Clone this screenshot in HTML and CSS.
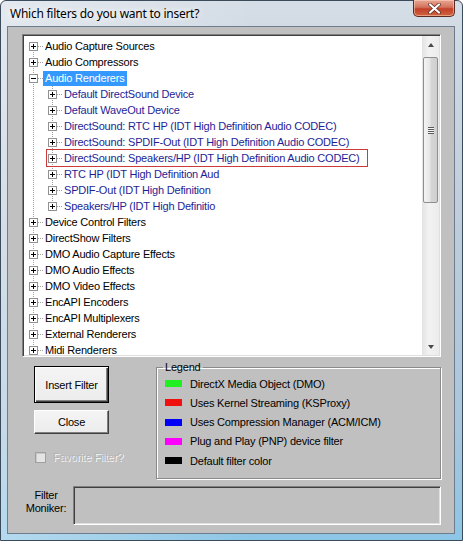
FILE: index.html
```html
<!DOCTYPE html>
<html lang="en">
<head>
    <meta charset="UTF-8">
    <title>Which filters do you want to insert?</title>
    <link rel="stylesheet" href="styles.css">
</head>
<body>
    <div class="window">
        <div class="titlebar">
            <span class="title">Which filters do you want to insert?</span>
            <div class="close">
                <svg width="13" height="11" viewBox="0 0 13 11">
                    <path d="M2 1.5 L11 9.5 M11 1.5 L2 9.5" stroke="#5a2a22" stroke-width="3.6" stroke-linecap="round"/>
                    <path d="M2 1.5 L11 9.5 M11 1.5 L2 9.5" stroke="#fff" stroke-width="2.2" stroke-linecap="round"/>
                </svg>
            </div>
        </div>

        <div class="client">
            <div class="tree">
                <div class="rows">
                    <div class="row"><span class="node"><span class="toggle"></span><span class="dots"></span><span class="label">Audio Capture Sources</span></span></div>
                    <div class="row"><span class="node"><span class="toggle"></span><span class="dots"></span><span class="label">Audio Compressors</span></span></div>
                    <div class="row"><span class="node"><span class="toggle open"></span><span class="dots"></span><span class="label selected">Audio Renderers</span></span></div>
                    <div class="children">
                        <div class="row child"><span class="node"><span class="toggle"></span><span class="dots"></span><span class="label">Default DirectSound Device</span></span></div>
                        <div class="row child"><span class="node"><span class="toggle"></span><span class="dots"></span><span class="label">Default WaveOut Device</span></span></div>
                        <div class="row child"><span class="node"><span class="toggle"></span><span class="dots"></span><span class="label">DirectSound: RTC HP (IDT High Definition Audio CODEC)</span></span></div>
                        <div class="row child"><span class="node"><span class="toggle"></span><span class="dots"></span><span class="label">DirectSound: SPDIF-Out (IDT High Definition Audio CODEC)</span></span></div>
                        <div class="row child"><span class="node marked"><span class="toggle"></span><span class="dots"></span><span class="label">DirectSound: Speakers/HP (IDT High Definition Audio CODEC)</span></span></div>
                        <div class="row child"><span class="node"><span class="toggle"></span><span class="dots"></span><span class="label">RTC HP (IDT High Definition Aud</span></span></div>
                        <div class="row child"><span class="node"><span class="toggle"></span><span class="dots"></span><span class="label">SPDIF-Out (IDT High Definition</span></span></div>
                        <div class="row child"><span class="node"><span class="toggle"></span><span class="dots"></span><span class="label">Speakers/HP (IDT High Definitio</span></span></div>
                    </div>
                    <div class="row"><span class="node"><span class="toggle"></span><span class="dots"></span><span class="label">Device Control Filters</span></span></div>
                    <div class="row"><span class="node"><span class="toggle"></span><span class="dots"></span><span class="label">DirectShow Filters</span></span></div>
                    <div class="row"><span class="node"><span class="toggle"></span><span class="dots"></span><span class="label">DMO Audio Capture Effects</span></span></div>
                    <div class="row"><span class="node"><span class="toggle"></span><span class="dots"></span><span class="label">DMO Audio Effects</span></span></div>
                    <div class="row"><span class="node"><span class="toggle"></span><span class="dots"></span><span class="label">DMO Video Effects</span></span></div>
                    <div class="row"><span class="node"><span class="toggle"></span><span class="dots"></span><span class="label">EncAPI Encoders</span></span></div>
                    <div class="row"><span class="node"><span class="toggle"></span><span class="dots"></span><span class="label">EncAPI Multiplexers</span></span></div>
                    <div class="row"><span class="node"><span class="toggle"></span><span class="dots"></span><span class="label">External Renderers</span></span></div>
                    <div class="row"><span class="node"><span class="toggle"></span><span class="dots"></span><span class="label">Midi Renderers</span></span></div>
                </div>
                <div class="scrollbar">
                    <div class="sb-button"><span class="arrow up"></span></div>
                    <div class="sb-track">
                        <div class="sb-thumb"><span class="grip"></span></div>
                    </div>
                    <div class="sb-button"><span class="arrow down"></span></div>
                </div>
            </div>

            <div class="middle">
                <div class="actions">
                    <button type="button" class="btn default">Insert Filter</button>
                    <button type="button" class="btn">Close</button>
                    <label class="favorite"><span class="check"></span>Favorite Filter?</label>
                </div>
                <fieldset class="legend">
                    <legend>Legend</legend>
                    <div class="key"><span class="swatch green"></span>DirectX Media Object (DMO)</div>
                    <div class="key"><span class="swatch red"></span>Uses Kernel Streaming (KSProxy)</div>
                    <div class="key"><span class="swatch blue"></span>Uses Compression Manager (ACM/ICM)</div>
                    <div class="key"><span class="swatch magenta"></span>Plug and Play (PNP) device filter</div>
                    <div class="key"><span class="swatch black"></span>Default filter color</div>
                </fieldset>
            </div>

            <div class="moniker-row">
                <div class="moniker-label">Filter<br>Moniker:</div>
                <div class="moniker-box"></div>
            </div>
        </div>
    </div>
</body>
</html>
```

FILE: styles.css
```css
body {
    margin: 0;
    font-family: "Liberation Sans", Arial, sans-serif;
    font-size: 11px;
    color: #000;
}
.window {
    width: 463px;
    height: 541px;
    box-sizing: border-box;
    display: flex;
    flex-direction: column;
    border: 1px solid #3c4b5c;
    border-radius: 6px 6px 0 0;
    background:
        linear-gradient(to right, rgba(255,255,255,0.35), rgba(255,255,255,0) 55%),
        linear-gradient(to bottom, #d5dde6, #c0cdda 40%, #a8c6dc 80%, #8cc6e6);
}
.titlebar {
    height: 26px;
    display: flex;
    justify-content: space-between;
    align-items: flex-start;
    padding: 0 7px 0 9px;
}
.title {
    font-family: "Noto Sans", sans-serif;
    font-size: 12px;
    letter-spacing: -0.25px;
    line-height: 26px;
    color: #000;
    text-shadow: 0 0 6px #fff, 0 0 10px #fff;
}
.close {
    width: 42px;
    height: 17px;
    box-sizing: border-box;
    margin-top: -1px;
    border: 1px solid #5b2a22;
    border-top: none;
    border-radius: 0 0 5px 5px;
    background: linear-gradient(to bottom, #e8a795, #d4735c 45%, #c2402a 55%, #d0643e);
    box-shadow: inset 0 0 0 1px rgba(255,220,200,0.5);
    display: flex;
    justify-content: center;
    align-items: center;
}
.client {
    flex: 1;
    margin: 0 8px 7px 7px;
    padding: 7px 13px 8px 14px;
    background: #c0c0c0;
    box-shadow: 0 0 0 1px #6d7d8e;
    display: flex;
    flex-direction: column;
}

/* tree view */
.tree {
    height: 323px;
    box-sizing: border-box;
    display: flex;
    background: #fff;
    border: 1px solid;
    border-color: #808080 #fff #fff #808080;
    box-shadow: inset 1px 1px 0 #404040, inset -1px -1px 0 #dfdfdf;
    padding: 1px;
}
.rows {
    flex: 1;
    overflow: hidden;
    padding-top: 2px;
    background: repeating-linear-gradient(to bottom, #a0a0a0 0 1px, transparent 1px 2px) 9px 8px / 1px 100% no-repeat;
}
.children {
    background: repeating-linear-gradient(to bottom, #a0a0a0 0 1px, transparent 1px 2px) 28px 0 / 1px calc(100% - 8px) no-repeat;
}
.row {
    height: 16px;
    display: flex;
    align-items: center;
    padding-left: 5px;
    white-space: nowrap;
    letter-spacing: -0.2px;
}
.row.child {
    padding-left: 24px;
    color: #1e1e96;
}
.node {
    display: inline-flex;
    align-items: center;
    height: 16px;
}
.node.marked {
    margin-left: -1px;
    padding-left: 1px;
    padding-right: 5px;
    outline: 1px solid #cc3a3a;
}
.toggle {
    width: 9px;
    height: 9px;
    box-sizing: border-box;
    border: 1px solid #919191;
    background:
        linear-gradient(#000, #000) 1px 3px / 5px 1px no-repeat,
        linear-gradient(#000, #000) 3px 1px / 1px 5px no-repeat,
        #fff;
}
.toggle.open {
    background:
        linear-gradient(#000, #000) 1px 3px / 5px 1px no-repeat,
        #fff;
}
.dots {
    width: 5px;
    height: 1px;
    background: repeating-linear-gradient(to right, #a0a0a0 0 1px, transparent 1px 2px);
}
.label {
    padding: 0 2px;
    line-height: 15px;
}
.label.selected {
    background: #3399ff;
    color: #fff;
}

/* scrollbar */
.scrollbar {
    width: 17px;
    display: flex;
    flex-direction: column;
    background: linear-gradient(to right, #e3e3e3, #f2f2f2 40%, #ececec);
}
.sb-button {
    height: 17px;
    display: flex;
    justify-content: center;
    align-items: center;
}
.arrow {
    width: 0;
    height: 0;
    border-left: 3.5px solid transparent;
    border-right: 3.5px solid transparent;
}
.arrow.up {
    border-bottom: 4px solid #4a4a4a;
}
.arrow.down {
    border-top: 4px solid #4a4a4a;
}
.sb-track {
    flex: 1;
    padding-top: 4px;
}
.sb-thumb {
    width: 15px;
    height: 146px;
    box-sizing: border-box;
    margin-left: 1px;
    border: 1px solid #8e8f8f;
    border-radius: 2px;
    background: linear-gradient(to right, #f4f4f4, #e6e6e6 45%, #d6d6d6 55%, #cfcfcf);
    display: flex;
    justify-content: center;
    align-items: center;
}
.grip {
    width: 6px;
    height: 7px;
    background: repeating-linear-gradient(to bottom, #5a5a5a 0 1px, #f4f4f4 1px 2px);
}

/* buttons and legend */
.middle {
    height: 118px;
    margin-top: 4px;
    display: flex;
}
.actions {
    width: 134px;
    box-sizing: border-box;
    padding: 5px 0 0 12px;
    display: flex;
    flex-direction: column;
    align-items: flex-start;
}
.btn {
    width: 75px;
    height: 24px;
    margin: 0;
    padding: 0;
    font-family: "Liberation Sans", Arial, sans-serif;
    font-size: 11px;
    letter-spacing: -0.2px;
    color: #000;
    background: linear-gradient(to bottom, #f4f4f4, #ececec);
    border: 1px solid;
    border-color: #fff #404040 #404040 #fff;
    box-shadow: inset -1px -1px 0 #808080;
}
.btn.default {
    height: 37px;
    margin-bottom: 7px;
    border: 1px solid #000;
    box-shadow: inset 1px 1px 0 #fff, inset -1px -1px 0 #404040, inset -2px -2px 0 #808080;
}
.favorite {
    display: flex;
    align-items: center;
    margin-top: 17px;
    margin-left: 1px;
    color: #b4b4b4;
    text-shadow: 1px 1px 0 #f6f6f6;
    letter-spacing: -0.2px;
}
.check {
    width: 11px;
    height: 11px;
    box-sizing: border-box;
    margin-right: 7px;
    border: 1px solid #a0a0a0;
    background: #e4e4e4;
    box-shadow: inset 1px 1px 0 #c8c8c8;
}
.legend {
    flex: 1;
    margin: 0;
    padding: 0;
    border: 1px solid #8a8a8a;
    box-shadow: inset 1px 1px 0 #fff, 1px 1px 0 #fff;
    min-width: 0;
}
.legend legend {
    margin-left: 6px;
    padding: 0 2px;
    line-height: 13px;
    letter-spacing: -0.2px;
}
.key {
    height: 19.25px;
    display: flex;
    align-items: center;
    letter-spacing: -0.2px;
}
.swatch {
    width: 17px;
    height: 7px;
    margin: 0 8px 0 8px;
}
.swatch.green { background: #20f020; }
.swatch.red { background: #f01010; }
.swatch.blue { background: #0000f8; }
.swatch.magenta { background: #ff00ff; }
.swatch.black { background: #000; }

/* moniker */
.moniker-row {
    margin-top: 7px;
    display: flex;
}
.moniker-label {
    width: 48px;
    margin-right: 3px;
    padding-top: 3px;
    text-align: center;
    line-height: 13px;
    letter-spacing: -0.2px;
}
.moniker-box {
    flex: 1;
    height: 39px;
    box-sizing: border-box;
    border: 1px solid;
    border-color: #808080 #fff #fff #808080;
    box-shadow: inset 1px 1px 0 #404040, inset -1px -1px 0 #dfdfdf;
}
```
